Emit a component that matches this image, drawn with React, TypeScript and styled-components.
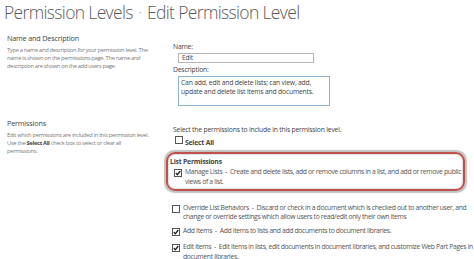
import React from "react";
import styled, { createGlobalStyle } from "styled-components";

const GlobalStyle = createGlobalStyle`
  html, body {
    margin: 0;
    padding: 0;
    background: #fff;
  }
  body {
    font-family: "Open Sans", "Noto Sans", sans-serif;
    color: #444;
    overflow: hidden;
  }
`;

const Page = styled.div`
  width: 474px;
  height: 259px;
  overflow: hidden;
`;

const Title = styled.h1`
  margin: 0;
  padding: 1px 0 0 4px;
  font-size: 17.5px;
  font-weight: 300;
  letter-spacing: -0.65px;
  line-height: 22px;
  color: #5a5a5a;
  white-space: nowrap;
`;

const Dot = styled.span`
  margin: 0 6px;
  font-size: 12px;
  vertical-align: 2px;
`;

const Section = styled.section<{ $top: number }>`
  display: grid;
  grid-template-columns: 159px 1fr;
  padding-left: 7px;
  margin-top: ${(p) => p.$top}px;
`;

const SideHeading = styled.div`
  font-size: 7.2px;
  letter-spacing: -0.15px;
  line-height: 10px;
  color: #444;
`;

const SideText = styled.p`
  margin: 3px 0 0;
  max-width: 153px;
  font-size: 5.8px;
  letter-spacing: -0.33px;
  line-height: 8px;
  color: #7a7a7a;

  b {
    color: #444;
    font-weight: 700;
  }
`;

const Field = styled.div`
  padding-left: 7px;
`;

const Label = styled.div<{ $mt?: number }>`
  font-size: 6.8px;
  letter-spacing: -0.2px;
  line-height: 10px;
  color: #444;
  margin-top: ${(p) => p.$mt ?? 0}px;
`;

const TextInput = styled.div`
  margin: 1px 0 0 5px;
  width: 131px;
  height: 8px;
  border: 1px solid #b5b5b5;
  font-size: 6.5px;
  letter-spacing: -0.2px;
  line-height: 8px;
  padding-left: 3px;
  color: #444;
`;

const TextArea = styled.div`
  margin: 1px 0 0 5px;
  width: 146px;
  height: 26px;
  border: 1px solid #8fb3d4;
  font-size: 6.8px;
  letter-spacing: -0.2px;
  line-height: 9px;
  padding: 1px 2px;
  color: #444;
`;

const Intro = styled.div`
  font-size: 6.8px;
  letter-spacing: -0.2px;
  line-height: 10px;
  color: #444;
  padding-left: 7px;
  margin-top: 7px;
`;

const SelectAllRow = styled.div`
  display: flex;
  align-items: flex-start;
  padding-left: 9px;
`;

const SelectAllText = styled.span`
  font-size: 6.8px;
  letter-spacing: -0.2px;
  font-weight: 700;
  line-height: 10px;
  margin: 3px 0 0 2px;
  color: #444;
`;

const Highlight = styled.div`
  margin: 4px 9px 0 0;
  border: 2px solid #c0504d;
  border-radius: 9px;
  box-shadow: 0 0 1px 1.5px rgba(120, 120, 120, 0.45),
    inset 0 0 1px 1px rgba(150, 150, 150, 0.3);
  padding: 3px 1px 2px 2px;
`;

const GroupHeading = styled.div`
  font-size: 6.8px;
  letter-spacing: -0.2px;
  font-weight: 700;
  line-height: 10px;
  color: #444;
`;

const Row = styled.div<{ $mt?: number; $indent?: number }>`
  display: flex;
  align-items: flex-start;
  margin-top: ${(p) => p.$mt ?? 0}px;
  padding-left: ${(p) => p.$indent ?? 6}px;
`;

const RowText = styled.div`
  font-size: 6.8px;
  letter-spacing: -0.33px;
  line-height: 9.8px;
  color: #555;
  margin-left: 3px;
`;

const Box = styled.span<{ $top?: number }>`
  flex: none;
  width: 6px;
  height: 6px;
  margin-top: ${(p) => p.$top ?? 2}px;
  border: 1px solid #555;
  background: #fff;
  display: flex;
  align-items: center;
  justify-content: center;
`;

const Check = ({ on, top }: { on?: boolean; top?: number }) => (
  <Box $top={top}>
    {on && (
      <svg width="6" height="6" viewBox="0 0 6 6">
        <path d="M0.8 3 L2.4 4.7 L5.3 1" fill="none" stroke="#222" strokeWidth="1.3" />
      </svg>
    )}
  </Box>
);

const Items = styled.div``;

const App = () => {
  return (
    <Page>
      <GlobalStyle />
      <Title>
        Permission Levels<Dot>·</Dot>Edit Permission Level
      </Title>

      <Section $top={9}>
        <div>
          <SideHeading>Name and Description</SideHeading>
          <SideText>
            Type a name and description for your permission level. The name
            is shown on the permissions page. The name and description are
            shown on the add users page.
          </SideText>
        </div>
        <Field>
          <Label $mt={9}>Name:</Label>
          <TextInput>Edit</TextInput>
          <Label $mt={2}>Description:</Label>
          <TextArea>
            Can add, edit and delete lists; can view, add, update and delete
            list items and documents.
          </TextArea>
        </Field>
      </Section>

      <Section $top={12}>
        <div>
          <SideHeading>Permissions</SideHeading>
          <SideText>
            Edit which permissions are included in this permission level.
            <br />
            Use the <b>Select All</b> check box to select or clear all
            <br />
            permissions.
          </SideText>
        </div>
        <Items>
          <Intro>Select the permissions to include in this permission level.</Intro>
          <SelectAllRow>
            <Check top={1} />
            <SelectAllText>Select All</SelectAllText>
          </SelectAllRow>

          <Highlight>
            <GroupHeading>List Permissions</GroupHeading>
            <Row $indent={4}>
              <Check on />
              <RowText>
                Manage Lists&nbsp; - &nbsp;Create and delete lists, add or remove
                columns in a list, and add or remove public views of a list.
              </RowText>
            </Row>
          </Highlight>

          <Row $mt={12}>
            <Check />
            <RowText>
              Override List Behaviors&nbsp; - &nbsp;Discard or check in a document
              which is checked out to another user, and change or override
              settings which allow users to read/edit only their own items
            </RowText>
          </Row>
          <Row $mt={4}>
            <Check on />
            <RowText>
              Add Items&nbsp; - &nbsp;Add items to lists and add documents to
              document libraries.
            </RowText>
          </Row>
          <Row $mt={6}>
            <Check on />
            <RowText>
              Edit Items&nbsp; - &nbsp;Edit items in lists, edit documents in
              document libraries, and customize Web Part Pages in document
              libraries.
            </RowText>
          </Row>
        </Items>
      </Section>
    </Page>
  );
};

export default App;
